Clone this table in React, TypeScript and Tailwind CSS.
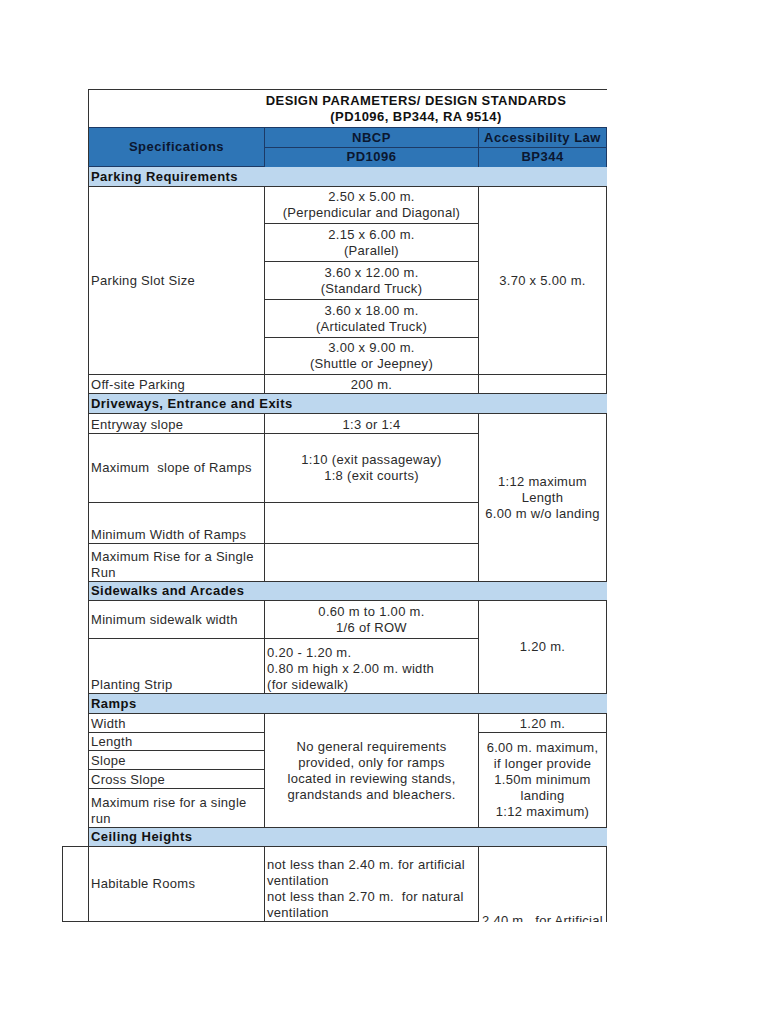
const cell =
  "border border-[#333] px-[2px] text-[13px] leading-[16px] tracking-[0.3px] text-[#2b2b2b] font-normal"
const head =
  "border border-[#1c3a66] bg-[#2e75b6] text-[13px] leading-[16px] tracking-[0.5px] text-[#0b1730] font-bold text-center align-middle"
const band =
  "border-l border-b border-[#333] bg-[#bdd7ee] px-[2px] text-[13px] leading-[16px] tracking-[0.45px] text-[#111] font-bold text-left align-middle"
const gap = "border-0 p-0"

function Band({ label, h }: { label: string; h: string }) {
  return (
    <tr className={h}>
      <td className={gap} />
      <td colSpan={3} className={band}>
        {label}
      </td>
    </tr>
  )
}

export default function App() {
  return (
    <div className="min-h-[1024px] w-[768px] bg-white pl-[62px] pt-[89px] font-['Liberation_Sans',Arial,sans-serif]">
      <div className="h-[833px] w-[545px] overflow-hidden">
        <table className="table-fixed border-collapse">
          <colgroup>
            <col className="w-[26px]" />
            <col className="w-[176px]" />
            <col className="w-[214px]" />
            <col className="w-[128px]" />
          </colgroup>
          <tbody>
            {/* title */}
            <tr className="h-[38px]">
              <td className={gap} />
              <td colSpan={3} className="border-l border-t border-[#333] p-0 align-middle">
                <div className="ml-[174px] w-[306px] text-center text-[13px] font-bold leading-[16px] tracking-[0.45px] text-[#111]">
                  DESIGN PARAMETERS/ DESIGN STANDARDS
                  <br />
                  (PD1096, BP344, RA 9514)
                </div>
              </td>
            </tr>

            {/* header */}
            <tr className="h-[20px]">
              <td className={gap} />
              <td rowSpan={2} className={head + " border-l-[#333]"}>
                Specifications
              </td>
              <td className={head}>NBCP</td>
              <td className={head}>Accessibility Law</td>
            </tr>
            <tr className="h-[19px]">
              <td className={gap} />
              <td className={head + " border-b-0"}>PD1096</td>
              <td className={head + " border-b-0"}>BP344</td>
            </tr>

            <Band label="Parking Requirements" h="h-[20px]" />
            <tr className="h-[37px]">
              <td className={gap} />
              <td rowSpan={5} className={cell + " align-middle"}>
                Parking Slot Size
              </td>
              <td className={cell + " text-center align-middle"}>
                2.50 x 5.00 m.
                <br />
                (Perpendicular and Diagonal)
              </td>
              <td rowSpan={5} className={cell + " text-center align-middle"}>
                3.70 x 5.00 m.
              </td>
            </tr>
            <tr className="h-[38px]">
              <td className={gap} />
              <td className={cell + " text-center align-middle"}>
                2.15 x 6.00 m.
                <br />
                (Parallel)
              </td>
            </tr>
            <tr className="h-[38px]">
              <td className={gap} />
              <td className={cell + " text-center align-middle"}>
                3.60 x 12.00 m.
                <br />
                (Standard Truck)
              </td>
            </tr>
            <tr className="h-[38px]">
              <td className={gap} />
              <td className={cell + " text-center align-middle"}>
                3.60 x 18.00 m.
                <br />
                (Articulated Truck)
              </td>
            </tr>
            <tr className="h-[37px]">
              <td className={gap} />
              <td className={cell + " text-center align-middle"}>
                3.00 x 9.00 m.
                <br />
                (Shuttle or Jeepney)
              </td>
            </tr>
            <tr className="h-[19px]">
              <td className={gap} />
              <td className={cell + " align-bottom"}>Off-site Parking</td>
              <td className={cell + " text-center align-bottom"}>200 m.</td>
              <td className={cell} />
            </tr>

            <Band label="Driveways, Entrance and Exits" h="h-[20px]" />
            <tr className="h-[20px]">
              <td className={gap} />
              <td className={cell + " align-bottom"}>Entryway slope</td>
              <td className={cell + " text-center align-bottom"}>1:3 or 1:4</td>
              <td rowSpan={4} className={cell + " text-center align-middle"}>
                1:12 maximum
                <br />
                Length
                <br />
                6.00 m w/o landing
              </td>
            </tr>
            <tr className="h-[69px]">
              <td className={gap} />
              <td className={cell + " align-middle"}>Maximum{"\u00a0 "}slope of Ramps</td>
              <td className={cell + " text-center align-middle"}>
                1:10 (exit passageway)
                <br />
                1:8 (exit courts)
              </td>
            </tr>
            <tr className="h-[41px]">
              <td className={gap} />
              <td className={cell + " align-bottom"}>Minimum Width of Ramps</td>
              <td className={cell} />
            </tr>
            <tr className="h-[38px]">
              <td className={gap} />
              <td className={cell + " align-bottom"}>Maximum Rise for a Single Run</td>
              <td className={cell} />
            </tr>

            <Band label="Sidewalks and Arcades" h="h-[19px]" />
            <tr className="h-[38px]">
              <td className={gap} />
              <td className={cell + " align-middle"}>Minimum sidewalk width</td>
              <td className={cell + " text-center align-middle"}>
                0.60 m to 1.00 m.
                <br />
                1/6 of ROW
              </td>
              <td rowSpan={2} className={cell + " text-center align-middle"}>
                1.20 m.
              </td>
            </tr>
            <tr className="h-[55px]">
              <td className={gap} />
              <td className={cell + " align-bottom"}>Planting Strip</td>
              <td className={cell + " align-bottom"}>
                0.20 - 1.20 m.
                <br />
                0.80 m high x 2.00 m. width
                <br />
                (for sidewalk)
              </td>
            </tr>

            <Band label="Ramps" h="h-[20px]" />
            <tr className="h-[19px]">
              <td className={gap} />
              <td className={cell + " align-bottom"}>Width</td>
              <td rowSpan={5} className={cell + " text-center align-middle"}>
                No general requirements
                <br />
                provided, only for ramps
                <br />
                located in reviewing stands,
                <br />
                grandstands and bleachers.
              </td>
              <td className={cell + " text-center align-bottom"}>1.20 m.</td>
            </tr>
            <tr className="h-[18px]">
              <td className={gap} />
              <td className={cell + " align-bottom"}>Length</td>
              <td rowSpan={4} className={cell + " text-center align-middle"}>
                6.00 m. maximum,
                <br />
                if longer provide
                <br />
                1.50m minimum
                <br />
                landing
                <br />
                1:12 maximum)
              </td>
            </tr>
            <tr className="h-[19px]">
              <td className={gap} />
              <td className={cell + " align-bottom"}>Slope</td>
            </tr>
            <tr className="h-[19px]">
              <td className={gap} />
              <td className={cell + " align-bottom"}>Cross Slope</td>
            </tr>
            <tr className="h-[39px]">
              <td className={gap} />
              <td className={cell + " align-bottom"}>Maximum rise for a single run</td>
            </tr>

            <Band label="Ceiling Heights" h="h-[19px]" />
            <tr className="h-[75px]">
              <td className="border border-[#333] p-0" />
              <td className={cell + " align-middle"}>Habitable Rooms</td>
              <td className={cell + " align-bottom"}>
                not less than 2.40 m. for artificial
                <br />
                ventilation
                <br />
                not less than 2.70 m.{"\u00a0 "}for natural
                <br />
                ventilation
              </td>
              <td rowSpan={2} className={cell + " pt-[66px] text-center align-top"}>
                2.40 m.{"\u00a0 "}for Artificial
                <br />
                ventilation
              </td>
            </tr>
            <tr className="h-[40px]">
              <td className={gap} />
              <td className={cell} />
              <td className={cell} />
            </tr>
          </tbody>
        </table>
      </div>
    </div>
  )
}
